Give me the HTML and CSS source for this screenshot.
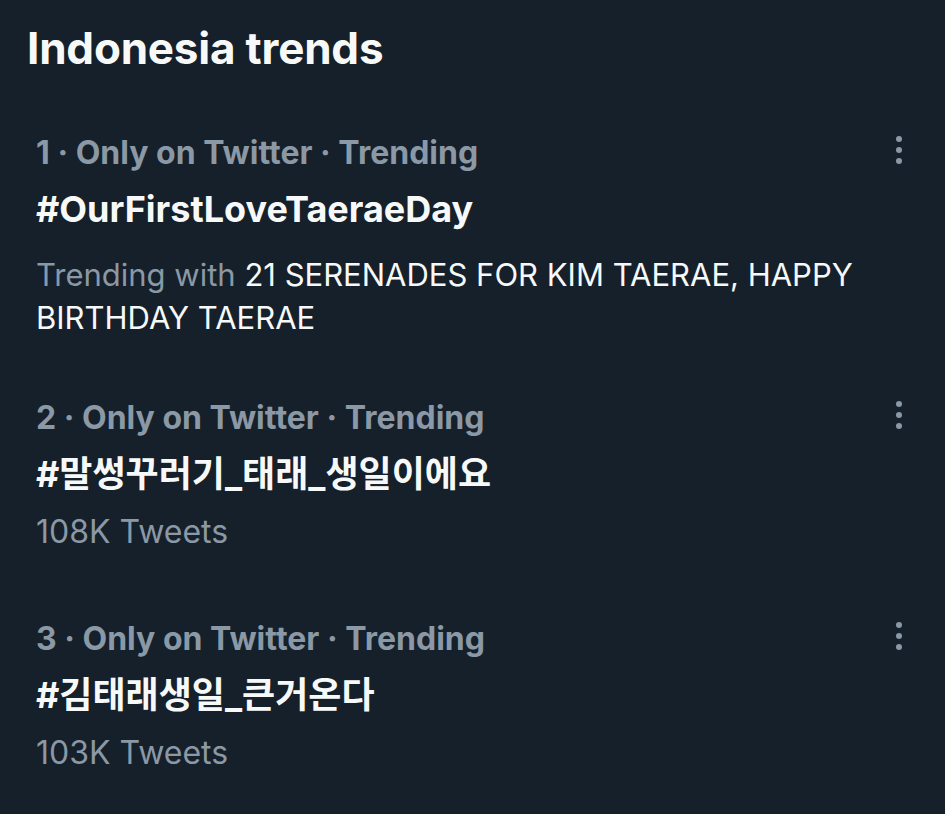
FILE: index.html
```html
<!DOCTYPE html>
<html lang="en">
<head>
<meta charset="utf-8">
<title>Indonesia trends</title>
<link rel="stylesheet" href="styles.css">
</head>
<body>
<main class="panel">
  <h1 class="panel-title">Indonesia trends</h1>
  <section class="trends">
    <article class="trend">
      <div class="trend-body">
        <div class="trend-meta">1 · Only on Twitter · Trending</div>
        <div class="trend-name">#OurFirstLoveTaeraeDay</div>
        <div class="trend-with"><span class="muted">Trending with</span> 21 SERENADES FOR KIM TAERAE, HAPPY BIRTHDAY TAERAE</div>
      </div>
      <button class="more" aria-label="More"><span class="dot"></span><span class="dot"></span><span class="dot"></span></button>
    </article>
    <article class="trend">
      <div class="trend-body">
        <div class="trend-meta">2 · Only on Twitter · Trending</div>
        <div class="trend-name">#말썽꾸러기_태래_생일이에요</div>
        <div class="trend-count">108K Tweets</div>
      </div>
      <button class="more" aria-label="More"><span class="dot"></span><span class="dot"></span><span class="dot"></span></button>
    </article>
    <article class="trend">
      <div class="trend-body">
        <div class="trend-meta">3 · Only on Twitter · Trending</div>
        <div class="trend-name">#김태래생일_큰거온다</div>
        <div class="trend-count">103K Tweets</div>
      </div>
      <button class="more" aria-label="More"><span class="dot"></span><span class="dot"></span><span class="dot"></span></button>
    </article>
  </section>
</main>
</body>
</html>
```

FILE: styles.css
```css
html, body {
  margin: 0;
  padding: 0;
  background: #15202b;
}
body {
  font-family: Inter, "Noto Sans CJK KR", sans-serif;
  color: #f7f9f9;
  width: 945px;
  height: 814px;
  overflow: hidden;
}
.panel {
  padding-top: 20px;
}
.panel-title {
  margin: 0 0 22px 0;
  padding-left: 27px;
  font-size: 44px;
  line-height: 57px;
  font-weight: 700;
  letter-spacing: -0.2px;
}
.trends {
  display: flex;
  flex-direction: column;
}
.trend {
  display: flex;
  align-items: flex-start;
  padding: 25px 31px 25px 36px;
}
.trend-body {
  flex: 1;
  min-width: 0;
}
.trend-meta {
  color: #8b98a5;
  font-size: 32px;
  line-height: 57px;
  font-weight: 700;
}
.trend-name {
  font-size: 36px;
  line-height: 57px;
  font-weight: 700;
}
.trend-with {
  margin-top: 15px;
  font-size: 31px;
  line-height: 43px;
  font-weight: 400;
  max-width: 840px;
}
.muted {
  color: #8b98a5;
}
.trend-count {
  color: #8b98a5;
  font-size: 32px;
  line-height: 57px;
  font-weight: 400;
}
.more {
  width: 30px;
  height: 52px;
  padding: 0;
  border: 0;
  background: transparent;
  display: flex;
  flex-direction: column;
  align-items: center;
  justify-content: center;
  gap: 4.6px;
}
.dot {
  width: 6px;
  height: 6px;
  border-radius: 50%;
  background: #8b98a5;
}
```
